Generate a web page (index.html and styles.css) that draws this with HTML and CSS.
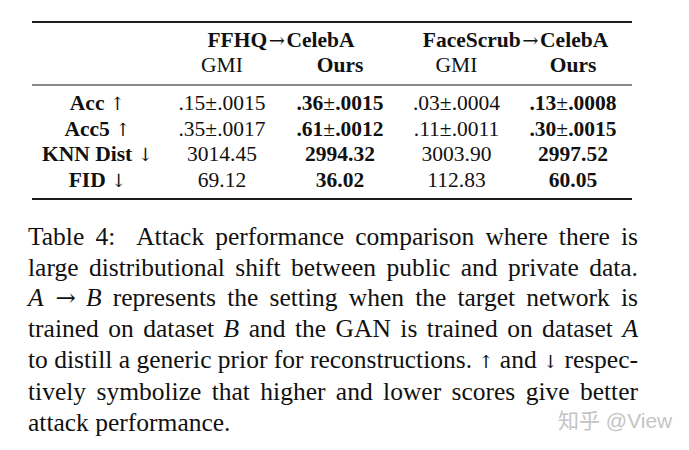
FILE: index.html
```html
<!DOCTYPE html>
<html lang="en">
<head>
<meta charset="utf-8">
<title>Table 4</title>
<link rel="stylesheet" href="styles.css">
</head>
<body>
<main class="page">
  <section class="booktab">
    <div class="head grid">
      <div class="cell"></div>
      <div class="cell span2 b">FFHQ<span class="n arw">→</span>CelebA</div>
      <div class="cell span2 b">FaceScrub<span class="n arw">→</span>CelebA</div>
      <div class="cell"></div>
      <div class="cell">GMI</div>
      <div class="cell b">Ours</div>
      <div class="cell">GMI</div>
      <div class="cell b">Ours</div>
    </div>
    <div class="body grid">
      <div class="cell b">Acc <span class="n arw">↑</span></div>
      <div class="cell">.15±.0015</div>
      <div class="cell b">.36<span class="n">±</span>.0015</div>
      <div class="cell">.03±.0004</div>
      <div class="cell b">.13<span class="n">±</span>.0008</div>

      <div class="cell b">Acc5 <span class="n arw">↑</span></div>
      <div class="cell">.35±.0017</div>
      <div class="cell b">.61<span class="n">±</span>.0012</div>
      <div class="cell">.11±.0011</div>
      <div class="cell b">.30<span class="n">±</span>.0015</div>

      <div class="cell b">KNN Dist <span class="n arw">↓</span></div>
      <div class="cell">3014.45</div>
      <div class="cell b">2994.32</div>
      <div class="cell">3003.90</div>
      <div class="cell b">2997.52</div>

      <div class="cell b">FID <span class="n arw">↓</span></div>
      <div class="cell">69.12</div>
      <div class="cell b">36.02</div>
      <div class="cell">112.83</div>
      <div class="cell b">60.05</div>
    </div>
  </section>

  <div class="caption">
    <div class="line">Table 4:&nbsp; Attack performance comparison where there is</div>
    <div class="line">large distributional shift between public and private data.</div>
    <div class="line"><i>A</i><span class="arw marrow">→</span><i>B</i> represents the setting when the target network is</div>
    <div class="line">trained on dataset <i>B</i> and the GAN is trained on dataset <i>A</i></div>
    <div class="line tight">to distill a generic prior for reconstructions. <span class="arw updown">↑</span> and <span class="arw updown">↓</span> respec-</div>
    <div class="line">tively symbolize that higher and lower scores give better</div>
    <div class="line last">attack performance.</div>
  </div>

  <div class="watermark">知乎 @View</div>
</main>
</body>
</html>
```

FILE: styles.css
```css
html, body {
  margin: 0;
  padding: 0;
  background: #ffffff;
}

.page {
  position: relative;
  width: 689px;
  height: 450px;
  padding-top: 21px;
  box-sizing: border-box;
  color: #111111;
  font-family: "Liberation Serif", "Times New Roman", serif;
  overflow: hidden;
}

.booktab {
  width: 600px;
  margin-left: 32px;
  border-top: 2px solid #1c1c1c;
  border-bottom: 2px solid #1c1c1c;
}

.grid {
  display: grid;
  grid-template-columns: 131px 118px 118px 115px 118px;
  grid-auto-rows: 25.6px;
  font-size: 21.5px;
  line-height: 25.6px;
  text-align: center;
}

.head {
  padding: 4.5px 0 5.3px;
  border-bottom: 2px solid #8a8a8a;
}

.body {
  padding: 5px 0 4.6px;
}

.cell {
  white-space: nowrap;
}

.span2 {
  grid-column: span 2;
}

.b {
  font-weight: bold;
}

.n {
  font-weight: normal;
}

.arw {
  font-family: "DejaVu Serif", "Liberation Serif", serif;
  font-variant-emoji: text;
  font-weight: normal;
  color: #111111;
}

.head .arw {
  display: inline-block;
  width: 1em;
  font-size: 0.9em;
  text-align: center;
}

.body .arw {
  font-size: 0.85em;
}

.caption {
  width: 610px;
  margin: 22px 0 0 28px;
  font-size: 25.5px;
  line-height: 30.67px;
}

.line {
  white-space: nowrap;
  text-align: justify;
  text-align-last: justify;
}

.line.last {
  text-align-last: left;
}

.line.tight {
  word-spacing: -1.5px;
}

.caption .updown {
  font-size: 0.7em;
}

.caption .marrow {
  display: inline-block;
  margin: 0 10px 0 12px;
  font-size: 0.95em;
}

.caption i {
  font-style: italic;
}

.watermark {
  position: absolute;
  left: 558px;
  top: 411px;
  font-family: "Liberation Sans", "Noto Sans CJK SC", sans-serif;
  font-size: 21px;
  line-height: 20px;
  color: #c4c4c4;
  text-shadow: 0 0 1px #ffffff;
  white-space: nowrap;
}
```
